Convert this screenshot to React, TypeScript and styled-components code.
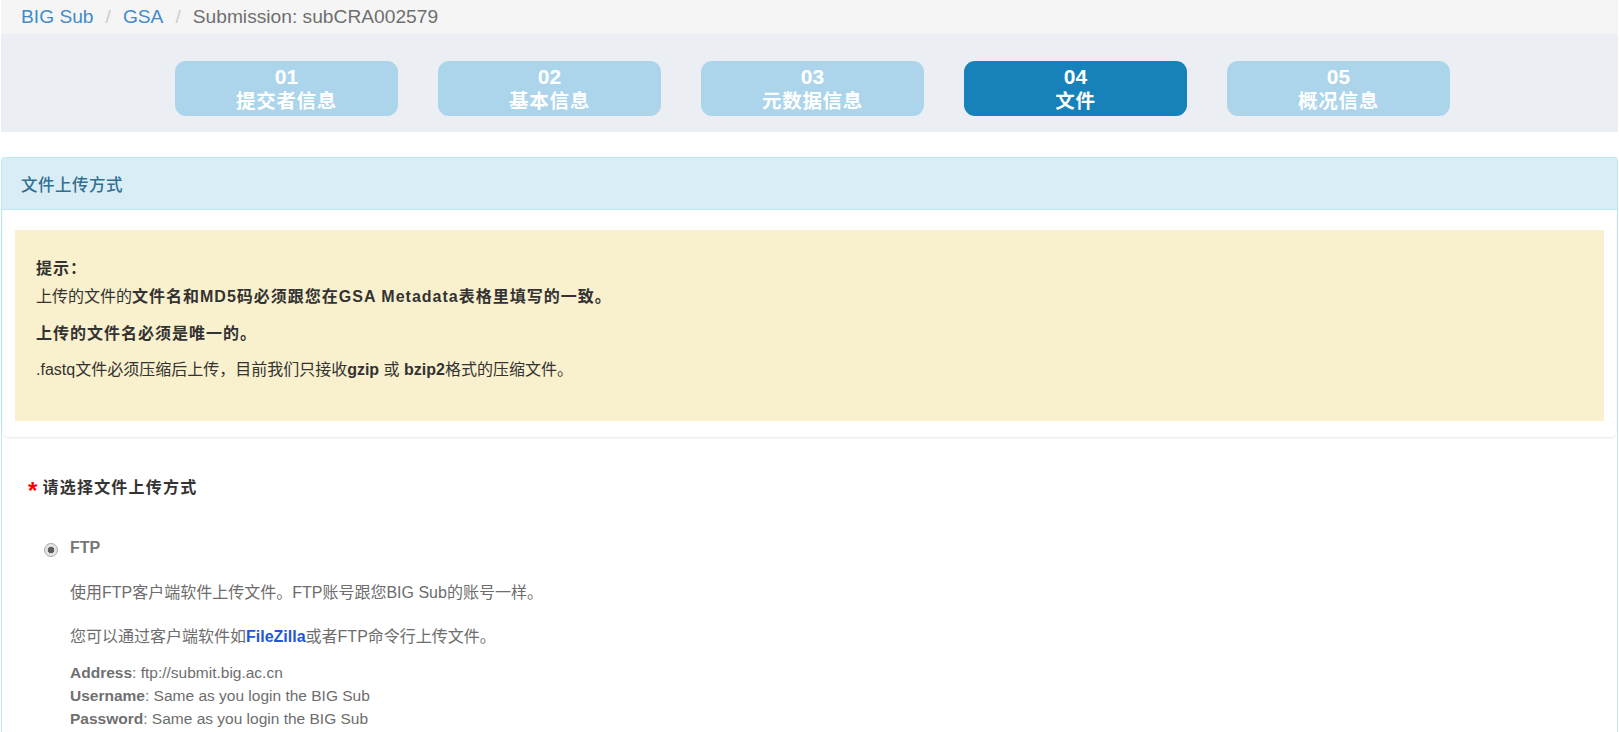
import React from "react";
import styled, { createGlobalStyle } from "styled-components";

const Global = createGlobalStyle`
  html, body { margin: 0; padding: 0; background: #ffffff; }
  body {
    font-family: "Liberation Sans", Arial, "Noto Sans CJK SC", sans-serif;
    color: #333333;
  }
  * { box-sizing: border-box; }
`;

const Page = styled.div`
  padding: 0 1px;
  width: 1619px;
`;

const Breadcrumb = styled.nav`
  height: 34px;
  background: #f5f5f5;
  display: flex;
  align-items: center;
  padding-left: 20px;
  font-size: 19.2px;
`;

const Crumb = styled.span<{ $active?: boolean }>`
  color: ${(p) => (p.$active ? "#6f6f6f" : "#428bca")};
`;

const Sep = styled.span`
  color: #cccccc;
  padding: 0 12px;
`;

const Stepper = styled.div`
  background: #ebeef3;
  height: 98px;
  padding: 27px 0 0 174px;
  display: flex;
  gap: 40px;
  align-items: flex-start;
`;

const Step = styled.div<{ $active?: boolean }>`
  width: 223px;
  height: 55px;
  border-radius: 11px;
  background: ${(p) => (p.$active ? "#1781b9" : "#acd5eb")};
  color: #ffffff;
  padding-top: 5px;
  display: flex;
  flex-direction: column;
  align-items: center;
  font-weight: bold;
`;

const StepNum = styled.div`
  font-size: 21px;
  line-height: 22px;
`;

const StepLabel = styled.div`
  font-size: 19.5px;
  line-height: 24px;
  letter-spacing: 0.7px;
  font-family: "Noto Sans CJK SC", sans-serif;
`;

const Panel = styled.section`
  margin-top: 25px;
  border: 1px solid #bce8f1;
  border-bottom: none;
  border-radius: 4px 4px 0 0;
  min-height: 600px;
`;

const PanelHeading = styled.header`
  height: 52px;
  background: #d9edf7;
  border-bottom: 1px solid #bce8f1;
  border-radius: 3px 3px 0 0;
  display: flex;
  align-items: center;
  padding-left: 19px;
  color: #31708f;
  font-size: 16.5px;
  letter-spacing: 0.5px;
  font-weight: 500;
  font-family: "Noto Sans CJK SC", sans-serif;
`;

const NoticeWrap = styled.div`
  margin: 0 1px;
  padding: 20px 12px 16px;
  border-radius: 0 0 5px 5px;
  box-shadow: 0 1px 2px rgba(0, 0, 0, 0.09);
`;

const Notice = styled.div`
  background: #f9f0cd;
  padding: 25px 21px 37px;
  font-size: 16px;
  line-height: 28px;
  color: #333333;
`;

const NoticeLine = styled.div<{ $gap?: number; $bold?: boolean }>`
  margin-top: ${(p) => p.$gap ?? 0}px;
  font-weight: ${(p) => (p.$bold ? "bold" : "normal")};
  letter-spacing: ${(p) => (p.$bold ? "1px" : "0")};
`;

const Strong = styled.b<{ $wide?: boolean }>`
  letter-spacing: ${(p) => (p.$wide ? "1px" : "0")};
`;

const Body = styled.div`
  padding: 40px 0 0 26px;
`;

const FieldLabel = styled.div`
  display: flex;
  align-items: center;
  font-size: 16px;
  line-height: 22px;
  font-weight: bold;
  letter-spacing: 1.2px;
  color: #333333;
`;

const Required = styled.span`
  color: #ff0000;
  font-size: 24px;
  font-weight: bold;
  margin-right: 4px;
  position: relative;
  top: 3px;
`;

const RadioRow = styled.label`
  margin-top: 38px;
  display: flex;
  align-items: center;
  margin-left: 16px;
  height: 22px;
`;

const Radio = styled.span`
  width: 14px;
  height: 14px;
  border-radius: 50%;
  border: 1px solid #a8a8a8;
  background: radial-gradient(circle, #5d5d5d 0 3px, #d9d9d9 3.5px, #f2f2f2 7px);
  margin-right: 12px;
  position: relative;
  top: 2px;
`;

const RadioText = styled.span`
  font-size: 16px;
  font-weight: bold;
  color: #777777;
`;

const Detail = styled.div`
  margin-left: 42px;
  color: #6d6d6d;
`;

const DetailLine = styled.p<{ $gap: number }>`
  margin: ${(p) => p.$gap}px 0 0;
  font-size: 16px;
  line-height: 22px;
`;

const Link = styled.a`
  color: #1d57d8;
  font-weight: bold;
  text-decoration: none;
`;

const InfoList = styled.div`
  margin-top: 13px;
  font-size: 15.5px;
  line-height: 23px;
`;

const Key = styled.b`
  color: #707070;
`;

const steps = [
  { n: "01", t: "提交者信息" },
  { n: "02", t: "基本信息" },
  { n: "03", t: "元数据信息" },
  { n: "04", t: "文件", active: true },
  { n: "05", t: "概况信息" },
];

export default function App() {
  return (
    <Page>
      <Global />
      <Breadcrumb>
        <Crumb>BIG Sub</Crumb>
        <Sep>/</Sep>
        <Crumb>GSA</Crumb>
        <Sep>/</Sep>
        <Crumb $active>Submission: subCRA002579</Crumb>
      </Breadcrumb>
      <Stepper>
        {steps.map((s) => (
          <Step key={s.n} $active={s.active}>
            <StepNum>{s.n}</StepNum>
            <StepLabel>{s.t}</StepLabel>
          </Step>
        ))}
      </Stepper>
      <Panel>
        <PanelHeading>文件上传方式</PanelHeading>
        <NoticeWrap>
          <Notice>
            <NoticeLine $bold>提示：</NoticeLine>
            <NoticeLine>
              上传的文件的<Strong $wide>文件名和MD5码必须跟您在GSA Metadata表格里填写的一致。</Strong>
            </NoticeLine>
            <NoticeLine $gap={9} $bold>上传的文件名必须是唯一的。</NoticeLine>
            <NoticeLine $gap={8}>
              .fastq文件必须压缩后上传，目前我们只接收<Strong>gzip</Strong> 或 <Strong>bzip2</Strong>格式的压缩文件。
            </NoticeLine>
          </Notice>
        </NoticeWrap>
        <Body>
          <FieldLabel>
            <Required>*</Required>请选择文件上传方式
          </FieldLabel>
          <RadioRow>
            <Radio />
            <RadioText>FTP</RadioText>
          </RadioRow>
          <Detail>
            <DetailLine $gap={23}>使用FTP客户端软件上传文件。FTP账号跟您BIG Sub的账号一样。</DetailLine>
            <DetailLine $gap={22}>
              您可以通过客户端软件如<Link href="#">FileZilla</Link>或者FTP命令行上传文件。
            </DetailLine>
            <InfoList>
              <div><Key>Address</Key>: ftp://submit.big.ac.cn</div>
              <div><Key>Username</Key>: Same as you login the BIG Sub</div>
              <div><Key>Password</Key>: Same as you login the BIG Sub</div>
            </InfoList>
          </Detail>
        </Body>
      </Panel>
    </Page>
  );
}
